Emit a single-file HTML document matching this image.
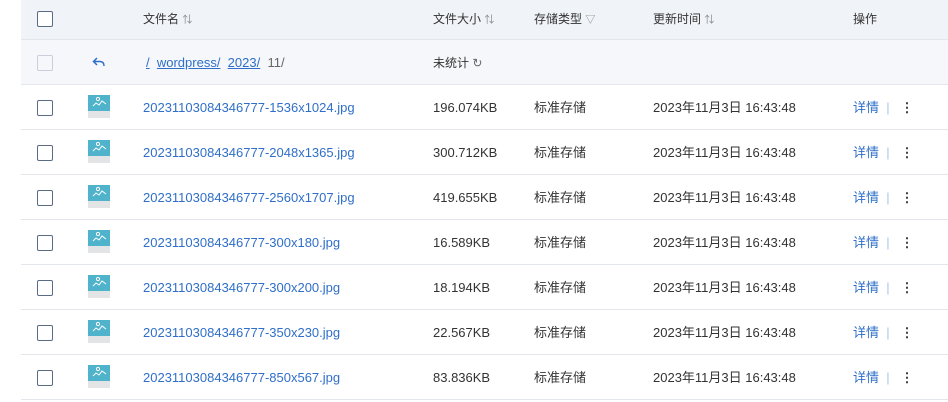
<!DOCTYPE html><html><head><meta charset="utf-8"><style>
body{margin:0;width:948px;height:402px;background:#fff;font-family:"Liberation Sans","Noto Sans CJK SC",sans-serif;font-size:13px;line-height:16px;color:#333;position:relative;overflow:hidden}
.r{position:absolute;left:21px;width:927px;border-bottom:1px solid #e3e6eb}
.a{position:absolute;white-space:nowrap;line-height:16px}
.cb{position:absolute;left:37px;width:14px;height:14px;border:1px solid #5a6b85;border-radius:2px;background:#fff}
.lk{color:#2f6fc9}
.ic{position:absolute;left:88px;width:22px;height:23px;background:#e3e4e6}
.ic svg{display:block}
.s{color:#888;font-size:10px}
.z{font-size:12px}
</style></head><body>
<div class="r" style="top:0;height:39px;background:#f0f3f7"></div>
<div class="cb" style="top:11px"></div>
<div class="a z" style="left:143px;top:11px">文件名 <span class="s">⇅</span></div>
<div class="a z" style="left:433px;top:11px">文件大小 <span class="s">⇅</span></div>
<div class="a z" style="left:534px;top:11px">存储类型 <span class="s">▽</span></div>
<div class="a z" style="left:653px;top:11px">更新时间 <span class="s">⇅</span></div>
<div class="a z" style="left:853px;top:11px">操作</div>
<div class="r" style="top:40px;height:44px;background:#f5f7fa"></div>
<div class="cb" style="top:55px;border-color:#ccd;background:#f5f7fa"></div>
<svg class="a" style="left:92px;top:56px" width="14" height="12" viewBox="0 0 14 12"><path d="M5 2 L1.5 5.5 L5 9 M1.5 5.5 H8 Q12 5.5 12 10" fill="none" stroke="#2f6fc9" stroke-width="1.5"/></svg>
<div class="a" style="left:146px;top:55px"><span class="lk" style="text-decoration:underline">/</span>&nbsp; <span class="lk" style="text-decoration:underline">wordpress/</span>&nbsp; <span class="lk" style="text-decoration:underline">2023/</span>&nbsp; <span style="color:#666">11/</span></div>
<div class="a z" style="left:433px;top:55px">未统计 <span style="color:#666">↻</span></div>
<div id="rows"></div>
<script>
var f=["1536x1024","2048x1365","2560x1707","300x180","300x200","350x230","850x567"],s=["196.074KB","300.712KB","419.655KB","16.589KB","18.194KB","22.567KB","83.836KB"],h="";
var ic='<svg width="22" height="16" viewBox="0 0 22 16"><rect width="22" height="16" fill="#4fb3cc"/><circle cx="10" cy="4" r="1.6" fill="none" stroke="#fff" stroke-width="1"/><path d="M5 11 L8 8 L11 10 L14 6 L18 9" fill="none" stroke="#fff" stroke-width="1"/></svg>';
for(var i=0;i<7;i++){var t=85+45*i;h+='<div class="r" style="top:'+t+'px;height:44px"></div><div class="cb" style="top:'+(t+15)+'px"></div><div class="ic" style="top:'+(t+10)+'px">'+ic+'</div><div class="a lk" style="left:143px;top:'+(t+15)+'px">20231103084346777-'+f[i]+'.jpg</div><div class="a" style="left:433px;top:'+(t+15)+'px">'+s[i]+'</div><div class="a" style="left:534px;top:'+(t+15)+'px">标准存储</div><div class="a" style="left:653px;top:'+(t+15)+'px">2023年11月3日 16:43:48</div><div class="a" style="left:853px;top:'+(t+15)+'px"><span class="lk">详情</span>&nbsp;&nbsp;<span style="color:#a9c4ea">|</span>&nbsp;&nbsp;&nbsp;<b>⋮</b></div>';}
document.getElementById("rows").innerHTML=h;
</script>
</body></html>
